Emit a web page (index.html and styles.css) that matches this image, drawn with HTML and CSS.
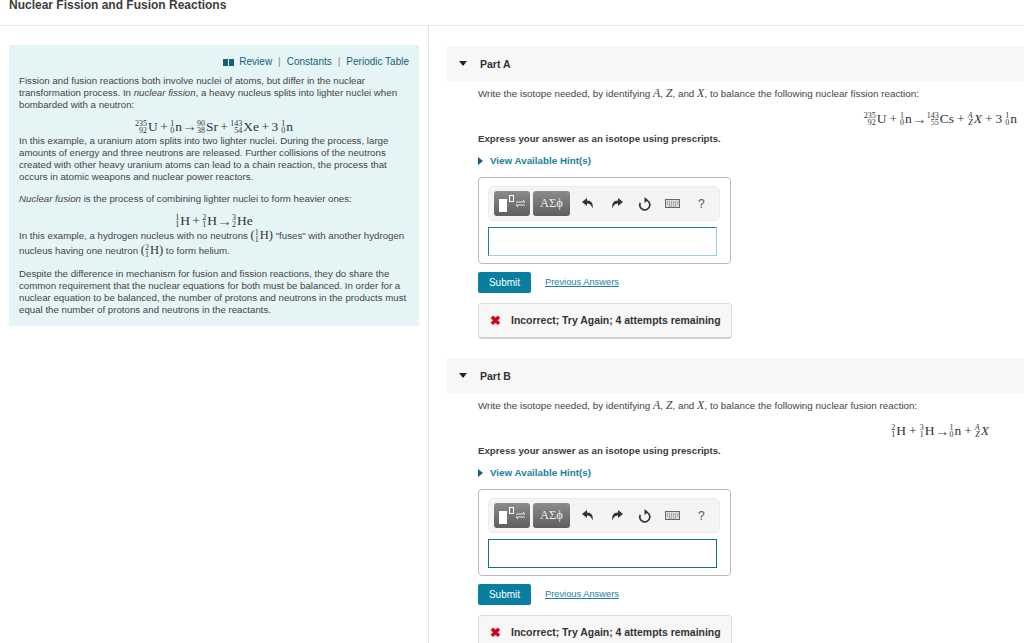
FILE: index.html
```html
<!DOCTYPE html>
<html lang="en">
<head>
  <meta charset="UTF-8">
  <title>Nuclear Fission and Fusion Reactions</title>
  <link rel="stylesheet" href="styles.css">
</head>
<body>
  <header class="top-bar">
    <h1>Nuclear Fission and Fusion Reactions</h1>
  </header>

  <div class="layout">
    <aside class="side">
      <div class="intro">
        <div class="intro-links">
          <svg class="book" width="11" height="7" viewBox="0 0 11 7"><path d="M0 0h5v7H0zM6 0h5v7H6z" fill="#14607a"/></svg>
          <a>Review</a><span class="sep">|</span><a>Constants</a><span class="sep">|</span><a>Periodic Table</a>
        </div>
        <p>Fission and fusion reactions both involve nuclei of atoms, but differ in the nuclear transformation process. In <em>nuclear fission</em>, a heavy nucleus splits into lighter nuclei when bombarded with a neutron:</p>
        <div class="eq eq-center eq-first">
          <span class="iso"><i>235</i><i>92</i></span>U<span class="op">+</span><span class="iso"><i>1</i><i>0</i></span>n<span class="arrow">→</span><span class="iso"><i>90</i><i>38</i></span>Sr<span class="op">+</span><span class="iso"><i>143</i><i>54</i></span>Xe<span class="op">+</span>3<span class="iso iso-gap"><i>1</i><i>0</i></span>n
        </div>
        <p>In this example, a uranium atom splits into two lighter nuclei. During the process, large amounts of energy and three neutrons are released. Further collisions of the neutrons created with other heavy uranium atoms can lead to a chain reaction, the process that occurs in atomic weapons and nuclear power reactors.</p>
        <p class="gap"><em>Nuclear fusion</em> is the process of combining lighter nuclei to form heavier ones:</p>
        <div class="eq eq-center eq-second">
          <span class="iso"><i>1</i><i>1</i></span>H<span class="op">+</span><span class="iso"><i>2</i><i>1</i></span>H<span class="arrow">→</span><span class="iso"><i>3</i><i>2</i></span>He
        </div>
        <p class="tall">In this example, a hydrogen nucleus with no neutrons <span class="eq eq-inline">(<span class="iso"><i>1</i><i>1</i></span>H)</span> "fuses" with another hydrogen nucleus having one neutron <span class="eq eq-inline">(<span class="iso"><i>2</i><i>1</i></span>H)</span> to form helium.</p>
        <p class="gap">Despite the difference in mechanism for fusion and fission reactions, they do share the common requirement that the nuclear equations for both must be balanced. In order for a nuclear equation to be balanced, the number of protons and neutrons in the products must equal the number of protons and neutrons in the reactants.</p>
      </div>
    </aside>

    <main class="parts">
      <section class="part">
        <div class="part-head"><span class="caret"></span>Part A</div>
        <div class="part-body">
          <p class="prompt">Write the isotope needed, by identifying <var>A</var>, <var>Z</var>, and <var>X</var>, to balance the following nuclear fission reaction:</p>
          <div class="eq eq-right">
            <span class="iso"><i>235</i><i>92</i></span>U<span class="op">+</span><span class="iso"><i>1</i><i>0</i></span>n<span class="arrow">→</span><span class="iso"><i>143</i><i>55</i></span>Cs<span class="op">+</span><span class="iso iso-var"><i>A</i><i>Z</i></span><var>X</var><span class="op">+</span>3<span class="iso iso-gap"><i>1</i><i>0</i></span>n
          </div>
          <p class="express">Express your answer as an isotope using prescripts.</p>
          <div class="hints"><span class="hint-caret"></span>View Available Hint(s)</div>
          <div class="answer-box">
            <div class="toolbar">
              <button class="tool-btn"><svg width="27" height="17" viewBox="0 0 27 17"><rect x="0" y="4" width="8" height="13" fill="#fff"/><rect x="10.500" y="0.500" width="4" height="6" fill="none" stroke="#fff"/><path d="M17 7h9l-2-2M26 10h-9l2 2" fill="none" stroke="#e8e8e8"/></svg></button>
              <button class="tool-btn tool-greek">ΑΣϕ</button>
              <div class="tool-icons">
                <svg width="12" height="11" viewBox="0 0 12 11"><path d="M5 0 0 4l5 4V5.500c3 0 4.500 1.500 5.500 5 1-5-1-8-5.500-8z" fill="#333"/></svg>
                <svg class="redo" width="12" height="11" viewBox="0 0 12 11"><path d="M7 0l5 4-5 4V5.500c-3 0-4.500 1.500-5.500 5-1-5 1-8 5.500-8z" fill="#333"/></svg>
                <svg width="13" height="14" viewBox="0 0 13 14"><path d="M7.500 3A5 5 0 1 1 2.300 5.800" fill="none" stroke="#333" stroke-width="1.700"/><path d="M6.500 0v6l3.500-3z" fill="#333"/></svg>
                <svg class="kbd" width="15" height="9" viewBox="0 0 15 9"><rect x=".5" y=".5" width="14" height="8" fill="#ddd" stroke="#666"/><path d="M2 3h11M2 5h11M4 7h7" stroke="#777" stroke-dasharray="1 1"/></svg>
                <span class="help">?</span>
              </div>
            </div>
            <div class="answer-input"></div>
          </div>
          <div class="actions"><button class="submit">Submit</button><a class="prev">Previous Answers</a></div>
          <div class="feedback"><span class="cross">✖</span>Incorrect; Try Again; 4 attempts remaining</div>
        </div>
      </section>

      <section class="part">
        <div class="part-head"><span class="caret"></span>Part B</div>
        <div class="part-body">
          <p class="prompt">Write the isotope needed, by identifying <var>A</var>, <var>Z</var>, and <var>X</var>, to balance the following nuclear fusion reaction:</p>
          <div class="eq eq-right eq-fusion">
            <span class="iso"><i>2</i><i>1</i></span>H<span class="op">+</span><span class="iso"><i>3</i><i>1</i></span>H<span class="arrow">→</span><span class="iso"><i>1</i><i>0</i></span>n<span class="op">+</span><span class="iso iso-var"><i>A</i><i>Z</i></span><var>X</var>
          </div>
          <p class="express">Express your answer as an isotope using prescripts.</p>
          <div class="hints"><span class="hint-caret"></span>View Available Hint(s)</div>
          <div class="answer-box">
            <div class="toolbar">
              <button class="tool-btn"><svg width="27" height="17" viewBox="0 0 27 17"><rect x="0" y="4" width="8" height="13" fill="#fff"/><rect x="10.500" y="0.500" width="4" height="6" fill="none" stroke="#fff"/><path d="M17 7h9l-2-2M26 10h-9l2 2" fill="none" stroke="#e8e8e8"/></svg></button>
              <button class="tool-btn tool-greek">ΑΣϕ</button>
              <div class="tool-icons">
                <svg width="12" height="11" viewBox="0 0 12 11"><path d="M5 0 0 4l5 4V5.500c3 0 4.500 1.500 5.500 5 1-5-1-8-5.500-8z" fill="#333"/></svg>
                <svg class="redo" width="12" height="11" viewBox="0 0 12 11"><path d="M7 0l5 4-5 4V5.500c-3 0-4.500 1.500-5.500 5-1-5 1-8 5.500-8z" fill="#333"/></svg>
                <svg width="13" height="14" viewBox="0 0 13 14"><path d="M7.500 3A5 5 0 1 1 2.300 5.800" fill="none" stroke="#333" stroke-width="1.700"/><path d="M6.500 0v6l3.500-3z" fill="#333"/></svg>
                <svg class="kbd" width="15" height="9" viewBox="0 0 15 9"><rect x=".5" y=".5" width="14" height="8" fill="#ddd" stroke="#666"/><path d="M2 3h11M2 5h11M4 7h7" stroke="#777" stroke-dasharray="1 1"/></svg>
                <span class="help">?</span>
              </div>
            </div>
            <div class="answer-input answer-active"></div>
          </div>
          <div class="actions"><button class="submit">Submit</button><a class="prev">Previous Answers</a></div>
          <div class="feedback"><span class="cross">✖</span>Incorrect; Try Again; 4 attempts remaining</div>
        </div>
      </section>
    </main>
  </div>
</body>
</html>
```

FILE: styles.css
```css
html, body {
  height: 100%;
}

body {
  margin: 0;
  background: #fff;
  color: #444;
  font-family: "Liberation Sans", Arial, sans-serif;
  font-size: 9.7px;
  line-height: 12px;
  overflow: hidden;
}

.top-bar {
  display: flow-root;
  height: 25px;
  padding-left: 9px;
  border-bottom: 1px solid #e6e8ec;
}

.top-bar h1 {
  margin: -2px 0 0;
  font-size: 12px;
  line-height: 15px;
  color: #3d3d3d;
}

.layout {
  display: grid;
  grid-template-columns: 429px 1fr;
  height: 617px;
}

.side {
  padding: 19px 9px 0;
  border-right: 1px solid #d9e3ee;
}

.intro {
  background: #e5f5f6;
  padding: 11px 10px 9px;
  height: 261px;
}

.intro p {
  margin: 0;
}

.intro .gap {
  margin-top: 10px;
}

.intro .tall {
  line-height: 15px;
}

.intro-links {
  display: flex;
  justify-content: flex-end;
  align-items: center;
  color: #14607a;
  font-size: 10px;
  margin-bottom: 7px;
}

.book {
  margin-right: 5px;
}

.sep {
  margin: 0 6px;
  color: #888;
}

/* equations */
.eq {
  font-family: "Liberation Serif", serif;
  font-size: 13.5px;
  color: #333;
  white-space: nowrap;
}

.eq-center {
  display: flex;
  justify-content: center;
  align-items: center;
}

.eq-center .op {
  margin: 0 2.400px;
}

.eq-first {
  height: 17px;
  margin-top: 7px;
}

.eq-second {
  height: 14px;
  margin-top: 9px;
}

.eq-inline {
  font-size: 12.5px;
}

.iso {
  display: inline-flex;
  flex-direction: column;
  align-items: flex-end;
  vertical-align: middle;
  margin-right: 1px;
  font-size: 8px;
  line-height: 7px;
}

.iso i {
  font-style: normal;
}

.iso-var i {
  font-style: italic;
}

.iso-gap {
  margin-left: 3px;
}

.op {
  margin: 0 3px;
}

.arrow {
  font-size: 15px;
  line-height: 1;
  color: #555;
}

var {
  font-family: "Liberation Serif", serif;
  font-style: italic;
  font-size: 12px;
}

.eq var {
  font-size: 13.5px;
}

/* parts */
.parts {
  padding-top: 20px;
}

.part-head {
  display: flex;
  align-items: center;
  height: 35px;
  margin-left: 18px;
  background: #f7f7f7;
  font-size: 10.5px;
  font-weight: bold;
  color: #333;
}

.part-body {
  padding: 0 7px 19px 49px;
}

.caret {
  width: 0;
  height: 0;
  margin: 0 13px 0 12px;
  border-left: 4px solid transparent;
  border-right: 4px solid transparent;
  border-top: 5px solid #222;
}

.prompt {
  margin: 6px 0 0;
  height: 12px;
  font-size: 9.85px;
  line-height: 12px;
}

.eq-right {
  display: flex;
  justify-content: flex-end;
  align-items: center;
  height: 18px;
  margin-top: 11px;
}

.eq-fusion {
  padding-right: 28px;
}

.express {
  margin: 5px 0 0;
  font-weight: bold;
  color: #3d3d3d;
}

.hints {
  display: flex;
  align-items: center;
  margin-top: 10px;
  font-size: 9.8px;
  font-weight: bold;
  color: #1a7f9c;
}

.hint-caret {
  width: 0;
  height: 0;
  margin-right: 7px;
  border-top: 4px solid transparent;
  border-bottom: 4px solid transparent;
  border-left: 5px solid #14607a;
}

.answer-box {
  box-sizing: border-box;
  width: 253px;
  height: 87px;
  margin-top: 10px;
  padding: 8px 10px 0 9px;
  border: 1px solid #bbb;
  border-radius: 4px;
}

.toolbar {
  box-sizing: border-box;
  display: flex;
  align-items: center;
  gap: 3px;
  width: 232px;
  height: 35px;
  padding: 0 5px;
  background: #f4f4f4;
  border: 1px solid #ececec;
  border-radius: 5px;
}

.tool-btn {
  display: flex;
  align-items: center;
  justify-content: center;
  width: 36px;
  height: 25px;
  padding: 0;
  border: 0;
  border-radius: 3px;
  background: linear-gradient(#8b8b8b, #5f5f5f);
  color: #eee;
}

.tool-greek {
  width: 37px;
  font-family: "Liberation Serif", serif;
  font-size: 12.5px;
}

.tool-icons {
  display: flex;
  align-items: center;
  gap: 15px;
  margin-left: 9px;
}

.redo {
  margin-left: 2px;
}

.kbd {
  margin-left: -1px;
}

.help {
  margin-left: 3px;
  font-size: 12px;
  color: #555;
}

.answer-input {
  box-sizing: border-box;
  width: 229px;
  height: 29px;
  margin-top: 6px;
  border: 1px solid #1a7f9c;
  border-bottom-color: #9fd0dc;
  border-right-color: #9fd0dc;
  background: #fff;
}

.answer-active {
  border: 1px solid #14708c;
}

.actions {
  display: flex;
  align-items: center;
  gap: 14px;
  margin-top: 8px;
}

.submit {
  width: 53px;
  height: 21px;
  padding: 0;
  border: 0;
  border-radius: 2px;
  background: #0a7ea0;
  color: #fff;
  font: 10px "Liberation Sans", Arial, sans-serif;
}

.prev {
  margin-bottom: 2px;
  font-size: 9.3px;
  color: #1a7f9c;
  text-decoration: underline;
}

.feedback {
  box-sizing: border-box;
  display: flex;
  align-items: center;
  width: 254px;
  height: 36px;
  margin-top: 10px;
  padding: 1px 0 0 11px;
  background: #f7f7f7;
  border: 1px solid #ddd;
  border-bottom: 2px solid #d2d2d2;
  border-radius: 4px;
  font-size: 10.45px;
  font-weight: bold;
  color: #333;
}

.cross {
  width: 21px;
  color: #d0021b;
  font-size: 13px;
}
```
